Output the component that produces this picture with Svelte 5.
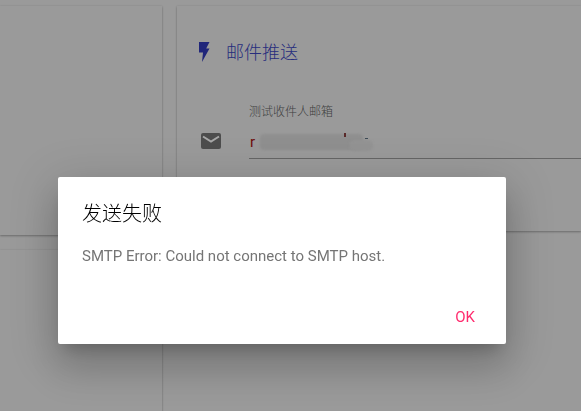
<script>
  let email = 'r';
</script>

<div class="page">
  <aside class="left">
    <div class="panel left-top"></div>
    <div class="panel left-bottom"></div>
  </aside>
  <main class="right">
    <section class="panel card">
      <h2 class="heading">
        <svg class="bolt" viewBox="0 0 12 20" width="12" height="20" aria-hidden="true">
          <path d="M1 0H11.5L8.2 6.5H11.5L4 20L5 10.5H1Z" fill="#20267a" />
        </svg>
        <span>邮件推送</span>
      </h2>
      <div class="field-row">
        <svg class="mail" viewBox="0 0 20 16" width="20" height="16" aria-hidden="true">
          <rect x="0" y="0" width="20" height="16" rx="2" fill="#4d4d4d" />
          <path d="M2 3.5L10 8.5L18 3.5" fill="none" stroke="#a8a8a8" stroke-width="2" />
        </svg>
        <div class="field">
          <div class="label">测试收件人邮箱</div>
          <div class="input">
            <span class="value">{email}</span>
            <span class="smudge"></span>
            <span class="smudge-end"></span>
            <span class="tick"></span>
            <span class="tick-end"></span>
          </div>
        </div>
      </div>
    </section>
  </main>
</div>

<div class="overlay">
  <div class="dialog" role="alertdialog">
    <h3 class="title">发送失败</h3>
    <p class="message">SMTP Error: Could not connect to SMTP host.</p>
    <div class="actions">
      <button class="ok">OK</button>
    </div>
  </div>
</div>

<style>
  :global(body) {
    margin: 0;
    overflow: hidden;
    background: #9a9a9a;
    font-family: Roboto, "Noto Sans CJK SC", sans-serif;
  }
  .page {
    display: flex;
    gap: 15px;
    width: 581px;
    height: 411px;
    padding-top: 6px;
    box-sizing: border-box;
    background: #9a9a9a;
    overflow: hidden;
  }
  .panel {
    background: #9a9a9a;
    box-shadow: 0 1px 2px rgba(0, 0, 0, 0.28), 0 0 2px rgba(0, 0, 0, 0.08);
  }
  .left {
    width: 162px;
    flex: none;
    display: flex;
    flex-direction: column;
    gap: 15px;
  }
  .left-top {
    height: 229px;
    flex: none;
  }
  .left-bottom {
    flex: 1;
    margin-bottom: -10px;
  }
  .right {
    flex: 1;
  }
  .card {
    height: 225px;
    box-sizing: border-box;
    padding: 31px 0 0 21px;
  }
  .heading {
    margin: 0;
    display: flex;
    align-items: center;
    gap: 16px;
    font-size: 18px;
    font-weight: 300;
    line-height: 28px;
    color: #272d7d;
    font-family: "Noto Sans CJK SC", sans-serif;
  }
  .bolt {
    flex: none;
    margin-top: 1px;
  }
  .field-row {
    display: flex;
    align-items: flex-end;
    gap: 28px;
    margin-top: 38px;
  }
  .mail {
    flex: none;
    margin: 0 0 10px 3px;
  }
  .field {
    flex: 1;
  }
  .label {
    font-size: 12px;
    line-height: 16px;
    font-weight: 300;
    color: #3e3e3e;
    font-family: "Noto Sans CJK SC", sans-serif;
  }
  .input {
    position: relative;
    height: 33px;
    margin-top: 7px;
    box-sizing: border-box;
    border-bottom: 1px solid #666;
    line-height: 32px;
    font-size: 15px;
    padding-left: 1px;
    color: #6e0a0a;
  }
  .value {
    display: block;
    width: 8px;
  }
  .smudge {
    position: absolute;
    left: 11px;
    top: 8px;
    width: 103px;
    height: 16px;
    border-radius: 4px;
    background: #8f8f8f;
    filter: blur(1px);
  }
  .smudge-end {
    position: absolute;
    left: 100px;
    top: 14px;
    width: 24px;
    height: 11px;
    border-radius: 6px;
    background: #939393;
    filter: blur(1px);
  }
  .tick {
    position: absolute;
    left: 95px;
    top: 7px;
    width: 2px;
    height: 4px;
    background: #5a2a2a;
  }
  .tick-end {
    position: absolute;
    left: 116px;
    top: 12px;
    width: 3px;
    height: 1px;
    background: #3d4a55;
  }
  .overlay {
    position: fixed;
    inset: 0;
    display: flex;
    align-items: flex-start;
    justify-content: center;
    padding: 177px 17px 0 0;
    box-sizing: border-box;
  }
  .dialog {
    width: 448px;
    height: 167px;
    box-sizing: border-box;
    background: #fff;
    border-radius: 2px;
    padding: 24px 24px 0;
    display: flex;
    flex-direction: column;
    box-shadow: 0 11px 15px -7px rgba(0,0,0,.2), 0 24px 38px 3px rgba(0,0,0,.14), 0 9px 46px 8px rgba(0,0,0,.12);
  }
  .title {
    margin: 0;
    font-size: 20px;
    font-weight: 300;
    line-height: 24px;
    color: #000;
    font-family: "Noto Sans CJK SC", sans-serif;
  }
  .message {
    margin: 21px 0 0;
    font-size: 15px;
    line-height: 20px;
    color: #757575;
    font-family: Roboto, sans-serif;
  }
  .actions {
    margin-top: auto;
    display: flex;
    justify-content: flex-end;
    padding-bottom: 9px;
  }
  .ok {
    border: 0;
    background: none;
    height: 36px;
    padding: 0 7px 0 0;
    font: 400 15px Roboto, sans-serif;
    color: #ff2a6d;
  }
</style>
